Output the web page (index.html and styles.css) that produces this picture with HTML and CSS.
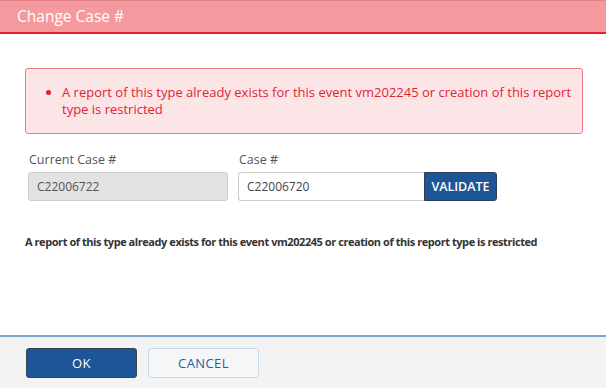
FILE: index.html
```html
<!DOCTYPE html>
<html>
<head>
<meta charset="utf-8">
<link rel="stylesheet" href="styles.css">
</head>
<body>
<div class="dialog">
  <div class="header">Change Case #</div>
  <div class="content">
    <div class="alert">
      <ul class="alert-list">
        <li>A report of this type already exists for this event vm202245 or creation of this report type is restricted</li>
      </ul>
    </div>
    <div class="form-row">
      <div class="field field-current">
        <label class="label">Current Case #</label>
        <div class="input input-disabled">C22006722</div>
      </div>
      <div class="field field-new">
        <label class="label">Case #</label>
        <div class="input-group">
          <div class="input">C22006720</div>
          <button class="btn-validate">VALIDATE</button>
        </div>
      </div>
    </div>
    <p class="message">A report of this type already exists for this event vm202245 or creation of this report type is restricted</p>
  </div>
  <div class="footer">
    <button class="btn btn-primary">OK</button>
    <button class="btn btn-secondary">CANCEL</button>
  </div>
</div>
</body>
</html>
```
FILE: styles.css
```css
html, body {
  margin: 0;
  padding: 0;
}
body {
  width: 606px;
  height: 388px;
  overflow: hidden;
  font-family: "Open Sans", "Noto Sans", sans-serif;
  background: #ffffff;
}
.dialog {
  display: flex;
  flex-direction: column;
  height: 388px;
}
.header {
  height: 31px;
  box-sizing: content-box;
  border-top: 1px solid #e5818a;
  border-bottom: 2px solid #e41e2f;
  background: #f4999e;
  color: #ffffff;
  font-size: 15.5px;
  font-weight: 500;
  line-height: 31px;
  padding-left: 17px;
}
.content {
  flex: 1;
  padding: 34px 23px 0 25px;
}
.alert {
  border: 1px solid #ee7a85;
  border-radius: 3px;
  background: #fce5e7;
  padding: 15px 10px 15px 0;
  color: #e31e32;
  font-size: 13px;
  line-height: 17px;
}
.alert-list {
  margin: 0;
  padding-left: 36px;
}
.form-row {
  display: flex;
  gap: 10px;
  margin-top: 18px;
  padding-left: 3px;
}
.field {
  display: flex;
  flex-direction: column;
  gap: 4px;
}
.field-current {
  width: 200px;
}
.label {
  font-size: 12.5px;
  line-height: 16px;
  color: #555555;
  padding-left: 1px;
}
.input {
  height: 29px;
  box-sizing: border-box;
  border: 1px solid #cccccc;
  border-radius: 3px;
  padding: 0 8px;
  font-size: 12px;
  line-height: 27px;
  color: #444444;
  background: #ffffff;
}
.input-disabled {
  background: #e2e2e2;
  color: #555555;
}
.input-group {
  display: flex;
}
.input-group .input {
  width: 186px;
  border-radius: 3px 0 0 3px;
  border-right: none;
}
.btn-validate {
  width: 73px;
  height: 29px;
  box-sizing: border-box;
  border: 1px solid #2c3f56;
  border-radius: 0 3px 3px 0;
  background: #1d5596;
  color: #ffffff;
  font-family: inherit;
  font-size: 12.5px;
  font-weight: 600;
  padding: 0;
}
.message {
  margin: 34px 0 0 0;
  font-size: 11px;
  line-height: 14px;
  font-weight: 700;
  letter-spacing: -0.44px;
  color: #333333;
  white-space: nowrap;
}
.footer {
  border-top: 2px solid #7ba7cc;
  background: #f3f3f3;
  display: flex;
  gap: 11px;
  padding: 11px 0 0 26px;
  box-sizing: border-box;
  height: 53px;
}
.btn {
  width: 111px;
  height: 30px;
  box-sizing: border-box;
  border-radius: 3px;
  font-family: inherit;
  font-size: 13px;
  letter-spacing: 0.4px;
  padding: 0;
}
.btn-primary {
  background: #1d5596;
  border: 1px solid #3a4350;
  color: #ffffff;
}
.btn-secondary {
  background: #f4f6f8;
  border: 1px solid #c8dbee;
  color: #2a5d9a;
}
```
